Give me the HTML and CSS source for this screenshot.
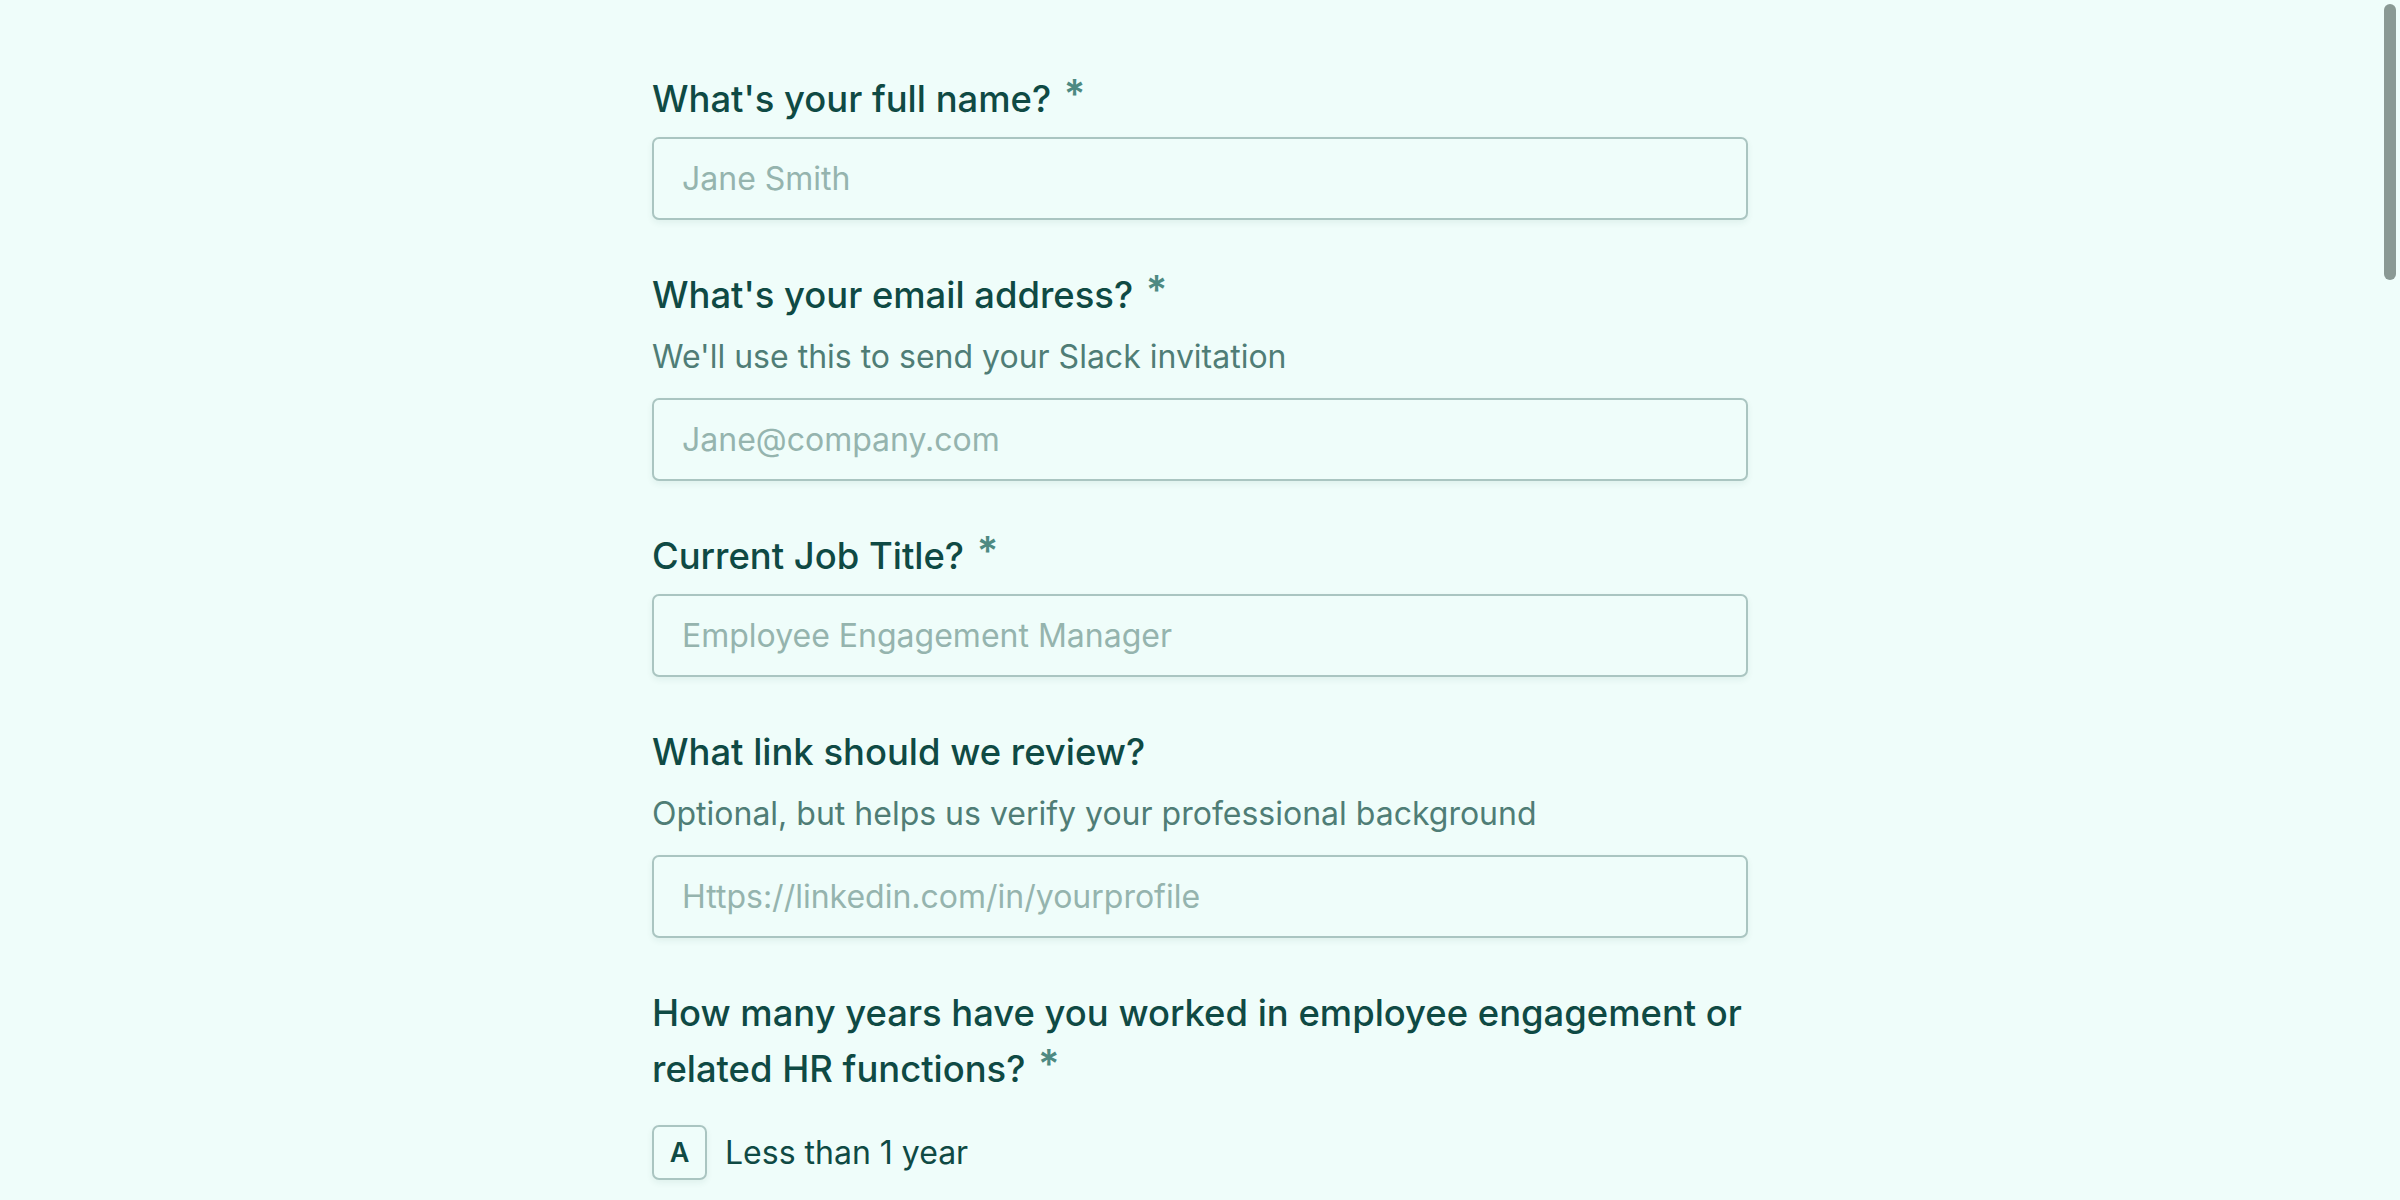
FILE: index.html
```html
<!DOCTYPE html>
<html lang="en">
<head>
<meta charset="utf-8">
<title>Application</title>
<link rel="stylesheet" href="styles.css">
</head>
<body>
<main class="form">
  <div class="field">
    <label class="label">What's your full name? <span class="req">*</span></label>
    <div class="input"><span class="ph">Jane Smith</span></div>
  </div>
  <div class="field">
    <label class="label">What's your email address? <span class="req">*</span></label>
    <p class="help">We'll use this to send your Slack invitation</p>
    <div class="input"><span class="ph">Jane@company.com</span></div>
  </div>
  <div class="field">
    <label class="label">Current Job Title? <span class="req">*</span></label>
    <div class="input"><span class="ph">Employee Engagement Manager</span></div>
  </div>
  <div class="field">
    <label class="label">What link should we review?</label>
    <p class="help">Optional, but helps us verify your professional background</p>
    <div class="input"><span class="ph">Https://linkedin.com/in/yourprofile</span></div>
  </div>
  <div class="field">
    <label class="label">How many years have you worked in employee engagement or related HR functions? <span class="req">*</span></label>
    <div class="options">
      <div class="option"><span class="key">A</span><span class="opt-text">Less than 1 year</span></div>
    </div>
  </div>
</main>
<div class="scroll-thumb"></div>
</body>
</html>
```
FILE: styles.css
```css
html, body {
  margin: 0;
  padding: 0;
  height: 100%;
  overflow: hidden;
}
body {
  background: #effdfa;
  font-family: Inter, "Noto Sans", sans-serif;
  color: #0f4a44;
}
.form {
  width: 1096px;
  margin: 0 auto;
  padding-top: 71px;
  display: flex;
  flex-direction: column;
  gap: 47px;
}
.field {
  display: flex;
  flex-direction: column;
}
.label {
  display: block;
  font-size: 36.4px;
  font-weight: 500;
  letter-spacing: 0;
  line-height: 56px;
  color: #0f4a44;
  margin-bottom: 10px;
}
.req {
  color: #4e8a82;
  font-size: 40px;
  vertical-align: 4px;
  margin-left: 3px;
  line-height: 0;
  font-weight: 600;
}
.help {
  margin: 1px 0 18px;
  font-size: 32px;
  line-height: 46px;
  color: #4f7d76;
}
.input {
  box-sizing: border-box;
  height: 83px;
  border: 2px solid #aac5c1;
  border-radius: 7px;
  padding: 0 28px;
  display: flex;
  align-items: center;
  box-shadow: 0 3px 6px rgba(30, 80, 70, 0.07);
  background: #effdfa;
}
.ph {
  font-size: 32px;
  color: #95b4ae;
}
.options {
  display: flex;
  flex-direction: column;
  margin-top: 18px;
}
.option {
  display: flex;
  align-items: center;
  gap: 18px;
}
.key {
  box-sizing: border-box;
  width: 55px;
  height: 55px;
  border: 2px solid #aac5c1;
  border-radius: 7px;
  display: flex;
  align-items: center;
  justify-content: center;
  font-size: 27px;
  font-weight: 600;
  color: #0f4a44;
  box-shadow: 0 3px 6px rgba(30, 80, 70, 0.07);
}
.opt-text {
  font-size: 32px;
  color: #0f4a44;
}
.scroll-thumb {
  position: fixed;
  top: 4px;
  right: 4px;
  width: 12px;
  height: 276px;
  border-radius: 6px;
  background: #8a9994;
}
```
